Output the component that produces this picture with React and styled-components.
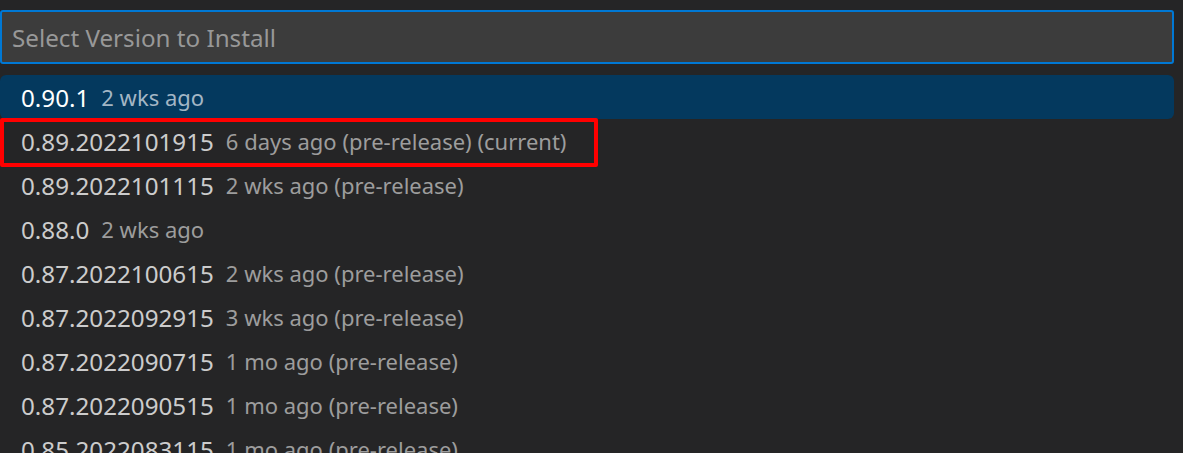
import React from 'react';
import styled, { createGlobalStyle } from 'styled-components';

const GlobalStyle = createGlobalStyle`
  html, body {
    margin: 0;
    background: #252526;
    overflow: hidden;
  }
  body {
    font-family: "Noto Sans", "Open Sans", sans-serif;
  }
`;

const versions = [
  { label: '0.90.1', description: '2 wks ago' },
  { label: '0.89.2022101915', description: '6 days ago (pre-release) (current)', marked: true },
  { label: '0.89.2022101115', description: '2 wks ago (pre-release)' },
  { label: '0.88.0', description: '2 wks ago' },
  { label: '0.87.2022100615', description: '2 wks ago (pre-release)' },
  { label: '0.87.2022092915', description: '3 wks ago (pre-release)' },
  { label: '0.87.2022090715', description: '1 mo ago (pre-release)' },
  { label: '0.87.2022090515', description: '1 mo ago (pre-release)' },
  { label: '0.85.2022083115', description: '1 mo ago (pre-release)' },
];

const QuickPick = styled.div`
  display: flex;
  flex-direction: column;
  padding: 10px 9px 0 0;
  height: 453px;
  box-sizing: border-box;
  overflow: hidden;
`;

const Filter = styled.input`
  flex-shrink: 0;
  box-sizing: border-box;
  width: 100%;
  height: 54px;
  margin: 0;
  padding: 0 10px;
  border: 2px solid #0078d4;
  border-radius: 3px;
  background: #3c3c3c;
  color: #cccccc;
  font-family: inherit;
  font-size: 24.2px;
  outline: none;

  &::placeholder {
    color: #989898;
  }
`;

const List = styled.ul`
  flex-shrink: 0;
  list-style: none;
  margin: 11px 0 0;
  padding: 0;
`;

const Row = styled.li`
  position: relative;
  display: flex;
  align-items: center;
  height: 44px;
  padding-left: 21px;
  border-radius: 6px;
  background: ${(p) => (p.$selected ? '#04395e' : 'transparent')};
  white-space: nowrap;
`;

const Label = styled.span`
  font-size: 24.2px;
  color: ${(p) => (p.$selected ? '#ffffff' : '#cccccc')};
`;

const Description = styled.span`
  margin-left: 12px;
  font-size: 22px;
  color: ${(p) => (p.$selected ? '#a3b6c5' : '#9d9d9d')};
`;

const Highlight = styled.div`
  position: absolute;
  top: -1px;
  left: 0;
  width: 598px;
  height: 49px;
  box-sizing: border-box;
  border: 4px solid #ff0000;
  border-radius: 2px;
  pointer-events: none;
`;

export default function App() {
  return (
    <>
      <GlobalStyle />
      <QuickPick>
        <Filter placeholder="Select Version to Install" readOnly />
        <List>
          {versions.map((v, i) => (
            <Row key={v.label} $selected={i === 0}>
              <Label $selected={i === 0}>{v.label}</Label>
              <Description $selected={i === 0}>{v.description}</Description>
              {v.marked && <Highlight />}
            </Row>
          ))}
        </List>
      </QuickPick>
    </>
  );
}
